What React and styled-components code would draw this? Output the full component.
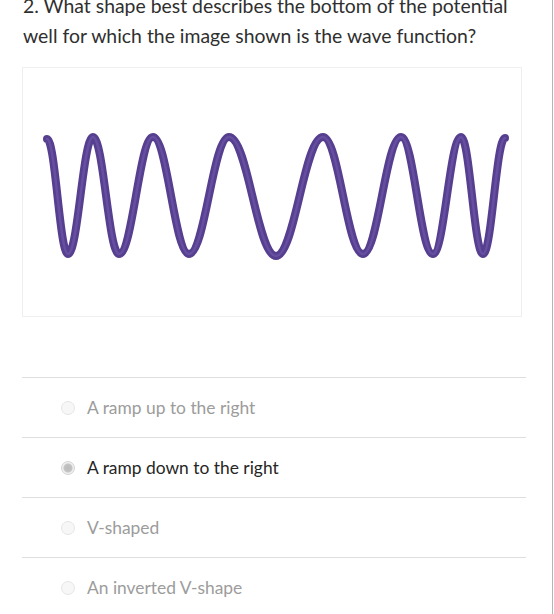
import React from 'react'
import styled, { createGlobalStyle } from 'styled-components'

const GlobalStyle = createGlobalStyle`
	html, body {
		margin: 0;
		padding: 0;
		background: #ffffff;
		overflow: hidden;
	}
	body {
		font-family: Lato, 'Open Sans', sans-serif;
	}
`

const answers = [
	{ id: 'a', label: 'A ramp up to the right', selected: false },
	{ id: 'b', label: 'A ramp down to the right', selected: true },
	{ id: 'c', label: 'V-shaped', selected: false },
	{ id: 'd', label: 'An inverted V-shape', selected: false },
]

// extrema of the wave drawing, in image coordinates
const extrema = [
	[24, 71], [45, 186], [70, 69], [96, 186], [130, 69], [166, 186],
	[206, 69], [253, 188], [300, 69], [340, 186], [378, 69], [410, 186],
	[438, 69], [460, 186], [482, 70],
]

const wavePath = () => {
	const k = 0.4
	let d = `M ${extrema[0][0]} ${extrema[0][1]}`
	for (let i = 1; i < extrema.length; i++) {
		const [x0, y0] = extrema[i - 1]
		const [x1, y1] = extrema[i]
		const dx = x1 - x0
		d += ` C ${x0 + dx * k} ${y0} ${x1 - dx * k} ${y1} ${x1} ${y1}`
	}
	return d
}

const Wave = () => {
	const d = wavePath()
	return (
		<svg width="498" height="248" viewBox="0 0 498 248">
			<path d={d} fill="none" stroke="#563f8f" strokeWidth="8" strokeLinecap="round" />
			<path d={d} fill="none" stroke="#6d55a8" strokeWidth="2.5" strokeLinecap="round" opacity="0.7" />
		</svg>
	)
}

const App = () => (
	<>
		<GlobalStyle />
		<Page>
			<Question>
				2. What shape best describes the bottom of the potential well for which the image
				shown is the wave function?
			</Question>
			<Figure>
				<Wave />
			</Figure>
			<AnswerList>
				{answers.map(a => (
					<AnswerRow key={a.id}>
						<Radio selected={a.selected} />
						<AnswerLabel selected={a.selected}>{a.label}</AnswerLabel>
					</AnswerRow>
				))}
			</AnswerList>
		</Page>
	</>
)

const Page = styled.div`
	box-sizing: border-box;
	width: 553px;
	height: 614px;
	padding-left: 22px;
	border-right: 1px solid #b5b5b5;
	overflow: hidden;
`

const Question = styled.div`
	margin: -9px 0 0 1px;
	width: 508px;
	font-size: 19.4px;
	line-height: 30px;
	color: #2f2f2f;
`

const Figure = styled.div`
	margin-top: 16px;
	width: 498px;
	height: 248px;
	border: 1px solid #efefef;
	display: flex;
`

const AnswerList = styled.div`
	margin-top: 60px;
	width: 504px;
`

const AnswerRow = styled.div`
	display: flex;
	align-items: center;
	height: 60px;
	border-top: 1px solid #dedede;
	padding-left: 39px;
	box-sizing: border-box;
	gap: 12px;
`

const Radio = styled.span`
	box-sizing: border-box;
	width: 14px;
	height: 14px;
	border-radius: 50%;
	border: 1px solid ${props => (props.selected ? '#d4d4d4' : '#e6e6e6')};
	background: ${props =>
		props.selected
			? 'radial-gradient(circle, #b9b9b9 0, #c4c4c4 4px, #eeeeee 5px, #f4f4f4 100%)'
			: '#f7f7f7'};
	flex-shrink: 0;
`

const AnswerLabel = styled.span`
	font-size: 17.4px;
	color: ${props => (props.selected ? '#262626' : '#9c9c9c')};
`

export default App
